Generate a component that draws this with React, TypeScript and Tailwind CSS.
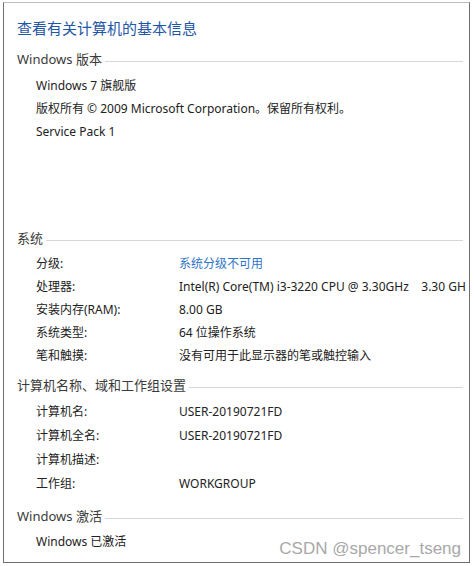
const font = { fontFamily: '"Noto Sans", "Noto Sans CJK SC", sans-serif' };

function Header({ title, className }: { title: string; className: string }) {
  return (
    <div className={`flex items-center h-[18px] pl-[13px] pr-[6px] gap-[3px] ${className}`}>
      <span className="text-[13px] text-[#3a3a3a] whitespace-nowrap">{title}</span>
      <div className="flex-1 h-px bg-[#d6d6d6] mt-[2px]" />
    </div>
  );
}

function Row({ label, value, link, h = 'h-[23px]' }: { label: string; value: string; link?: boolean; h?: string }) {
  return (
    <div className={`flex items-center pl-[32px] mr-[3px] overflow-hidden ${h} whitespace-nowrap`}>
      <span className="w-[143px] shrink-0 text-[12px] text-[#222]">{label}</span>
      <span className={`text-[12px] whitespace-pre ${link ? 'text-[#2f74c8]' : 'text-[#222]'}`}>{value}</span>
    </div>
  );
}

export default function App() {
  return (
    <div className="w-[474px] h-[566px] bg-white relative overflow-hidden" style={font}>
      <div className="absolute left-[3px] top-[2px] w-[467px] h-[561px] border border-[#6e6e6e] border-t-[#bdbdbd] overflow-hidden">
        <div className="pt-[15px] pl-[13px] h-[35px] flex items-center">
          <span className="text-[15px] text-[#1f56a6] leading-5">查看有关计算机的基本信息</span>
        </div>
        <Header title="Windows 版本" className="mt-[13px]" />
        <div className="mt-[5px]">
          <div className="flex items-center pl-[32px] h-[23px] text-[12px] text-[#222]">Windows 7 旗舰版</div>
          <div className="flex items-center pl-[32px] h-[23px] text-[12px] text-[#222] whitespace-nowrap">
            版权所有 © 2009 Microsoft Corporation。保留所有权利。
          </div>
          <div className="flex items-center pl-[32px] h-[23px] text-[12px] text-[#222]">Service Pack 1</div>
        </div>
        <Header title="系统" className="mt-[87px]" />
        <div className="mt-[4px]">
          <Row label="分级:" value="系统分级不可用" link />
          <Row label="处理器:" value="Intel(R) Core(TM) i3-3220 CPU @ 3.30GHz    3.30 GHz" />
          <Row label="安装内存(RAM):" value="8.00 GB" />
          <Row label="系统类型:" value="64 位操作系统" />
          <Row label="笔和触摸:" value="没有可用于此显示器的笔或触控输入" />
        </div>
        <Header title="计算机名称、域和工作组设置" className="mt-[10px]" />
        <div className="mt-[5px]">
          <Row label="计算机名:" value="USER-20190721FD" h="h-[24px]" />
          <Row label="计算机全名:" value="USER-20190721FD" h="h-[24px]" />
          <Row label="计算机描述:" value="" h="h-[24px]" />
          <Row label="工作组:" value="WORKGROUP" h="h-[24px]" />
        </div>
        <Header title="Windows 激活" className="mt-[12px]" />
        <div className="mt-[4px]">
          <div className="flex items-center pl-[32px] h-[23px] text-[12px] text-[#222]">Windows 已激活</div>
        </div>
      </div>
      <span
        className="absolute right-[13px] top-[538px] text-[17px] leading-[22px] text-[#a8a8a8]"
        style={{ fontFamily: '"Liberation Sans", Arial, sans-serif' }}
      >
        CSDN @spencer_tseng
      </span>
    </div>
  );
}
